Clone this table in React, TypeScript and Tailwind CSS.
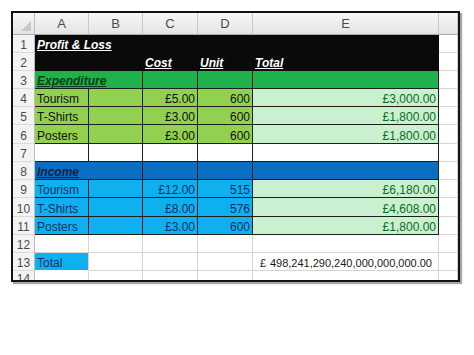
import React from "react";

type CellSpec = {
  text?: React.ReactNode;
  cls: string;
  span?: 1 | 2 | 5;
};

const DARK = "border-r border-b border-r-[#1e1e1e] border-b-[#1e1e1e]";
const GRID = "border-r border-b border-r-[#d4d4d4] border-b-[#d4d4d4]";
const BLACK = "border-r border-b border-r-[#0a0a0a] border-b-[#0a0a0a]";

const hdr = "font-bold italic underline";

function Cell({ text, cls, span }: CellSpec) {
  const spanCls = span === 5 ? "col-span-5" : span === 2 ? "col-span-2" : "";
  return (
    <div className={`flex items-end pb-[1px] px-[2px] whitespace-nowrap overflow-hidden ${spanCls} ${cls}`}>
      {text}
    </div>
  );
}

function RowNum({ n }: { n: number }) {
  return (
    <div className="flex items-end justify-center pb-[1px] bg-[#f3f3f3] text-[#4b4b4b] border-r border-b border-r-[#bdbdbd] border-b-[#dadada]">
      {n}
    </div>
  );
}

const expenses = [
  { name: "Tourism", cost: "£5.00", unit: "600", total: "£3,000.00" },
  { name: "T-Shirts", cost: "£3.00", unit: "600", total: "£1,800.00" },
  { name: "Posters", cost: "£3.00", unit: "600", total: "£1,800.00" },
];

const income = [
  { name: "Tourism", cost: "£12.00", unit: "515", total: "£6,180.00" },
  { name: "T-Shirts", cost: "£8.00", unit: "576", total: "£4,608.00" },
  { name: "Posters", cost: "£3.00", unit: "600", total: "£1,800.00" },
];

function blank(cls = `bg-white ${GRID}`): CellSpec {
  return { cls };
}

export default function App() {
  const rows: { n: number; h: string; cells: CellSpec[] }[] = [];

  rows.push({
    n: 1,
    h: "h-[18px]",
    cells: [
      { span: 5, text: <span className={hdr}>Profit &amp; Loss</span>, cls: `bg-[#0a0a0a] text-white ${BLACK}` },
      blank(),
    ],
  });
  rows.push({
    n: 2,
    h: "h-[18px]",
    cells: [
      { span: 2, cls: `bg-[#0a0a0a] ${BLACK}` },
      { text: <span className={hdr}>Cost</span>, cls: `bg-[#0a0a0a] text-white ${BLACK}` },
      { text: <span className={hdr}>Unit</span>, cls: `bg-[#0a0a0a] text-white ${BLACK}` },
      { text: <span className={hdr}>Total</span>, cls: `bg-[#0a0a0a] text-white ${BLACK}` },
      blank(),
    ],
  });
  rows.push({
    n: 3,
    h: "h-[18px]",
    cells: [
      { span: 2, text: <span className={hdr}>Expenditure</span>, cls: `bg-[#1fb14b] text-[#053d17] ${DARK}` },
      { cls: `bg-[#1fb14b] ${DARK}` },
      { cls: `bg-[#1fb14b] ${DARK}` },
      { cls: `bg-[#1fb14b] ${DARK}` },
      blank(),
    ],
  });
  expenses.forEach((e, i) => {
    rows.push({
      n: 4 + i,
      h: i === 2 ? "h-[19px]" : "h-[18px]",
      cells: [
        { text: e.name, cls: `bg-[#92d050] text-[#111] ${DARK}` },
        { cls: `bg-[#92d050] ${DARK}` },
        { text: e.cost, cls: `bg-[#92d050] text-[#111] justify-end ${DARK}` },
        { text: e.unit, cls: `bg-[#92d050] text-[#111] justify-end ${DARK}` },
        { text: e.total, cls: `bg-[#c9f0cf] text-[#0f6b1f] justify-end ${DARK}` },
        blank(),
      ],
    });
  });
  rows.push({
    n: 7,
    h: "h-[18px]",
    cells: [
      { cls: `bg-white ${DARK}` },
      { cls: `bg-white ${DARK}` },
      { cls: `bg-white ${DARK}` },
      { cls: `bg-white ${DARK}` },
      { cls: `bg-white ${DARK}` },
      blank(),
    ],
  });
  rows.push({
    n: 8,
    h: "h-[18px]",
    cells: [
      { span: 2, text: <span className={hdr}>Income</span>, cls: `bg-[#0a6fc2] text-[#0b1f4a] ${DARK}` },
      { cls: `bg-[#0a6fc2] ${DARK}` },
      { cls: `bg-[#0a6fc2] ${DARK}` },
      { cls: `bg-[#0a6fc2] ${DARK}` },
      blank(),
    ],
  });
  income.forEach((e, i) => {
    rows.push({
      n: 9 + i,
      h: i === 1 ? "h-[19px]" : "h-[18px]",
      cells: [
        { text: e.name, cls: `bg-[#0eb0ef] text-[#0f2f66] ${DARK}` },
        { cls: `bg-[#0eb0ef] ${DARK}` },
        { text: e.cost, cls: `bg-[#0eb0ef] text-[#0f2f66] justify-end ${DARK}` },
        { text: e.unit, cls: `bg-[#0eb0ef] text-[#0f2f66] justify-end ${DARK}` },
        { text: e.total, cls: `bg-[#c9f0cf] text-[#0f6b1f] justify-end ${DARK}` },
        blank(),
      ],
    });
  });
  rows.push({
    n: 12,
    h: "h-[18px]",
    cells: [blank(), blank(), blank(), blank(), blank(), blank()],
  });
  rows.push({
    n: 13,
    h: "h-[18px]",
    cells: [
      { text: "Total", cls: `bg-[#0eb0ef] text-[#0f2f66] border-r border-b border-r-[#d4d4d4] border-b-white` },
      blank(),
      blank(),
      blank(),
      {
        text: (
          <span className="flex w-full justify-between pl-[5px] pr-[4px] text-[11px]">
            <span>£</span>
            <span>498,241,290,240,000,000,000.00</span>
          </span>
        ),
        cls: `bg-white text-[#1a1a1a] ${GRID}`,
      },
      blank(),
    ],
  });

  return (
    <div className="w-[474px] h-[355px] bg-white pt-[11px] pl-[11px] font-['Liberation_Sans',Arial,sans-serif] text-[12px] leading-none">
      <div className="w-[449px] h-[271px] border-2 border-[#111] overflow-hidden shadow-[2px_2px_1px_rgba(0,0,0,0.35)]">
        <div className="grid grid-cols-[22px_54px_54px_55px_55px_186px_19px]">
          {/* column headers */}
          <div className="h-[22px] relative bg-gradient-to-b from-[#f7f7f7] to-[#e4e4e4] border-r border-b border-r-[#bdbdbd] border-b-[#a9a9a9]">
            <svg className="absolute right-[3px] bottom-[3px]" width="10" height="10" viewBox="0 0 10 10">
              <polygon points="10,0 10,10 0,10" fill="#c9c9c9" />
            </svg>
          </div>
          {["A", "B", "C", "D", "E", ""].map((l, i) => (
            <div
              key={i}
              className="h-[22px] flex items-center justify-center bg-gradient-to-b from-[#f7f7f7] to-[#e4e4e4] text-[#4a4a4a] text-[13px] border-r border-b border-r-[#c8c8c8] border-b-[#a9a9a9]"
            >
              {l}
            </div>
          ))}

          {rows.map((r) => (
            <React.Fragment key={r.n}>
              <div className={`${r.h} grid`}>
                <RowNum n={r.n} />
              </div>
              {r.cells.map((c, j) => (
                <Cell key={j} {...c} cls={`${r.h} ${c.cls}`} />
              ))}
            </React.Fragment>
          ))}

          {/* partial row 14 */}
          <div className="h-[12px] flex items-start justify-center pt-[2px] bg-[#f3f3f3] text-[#4b4b4b] border-r border-r-[#bdbdbd]">
            14
          </div>
          {[0, 1, 2, 3, 4, 5].map((i) => (
            <div key={i} className="h-[12px] bg-white border-r border-r-[#d4d4d4]" />
          ))}
        </div>
      </div>
    </div>
  );
}
